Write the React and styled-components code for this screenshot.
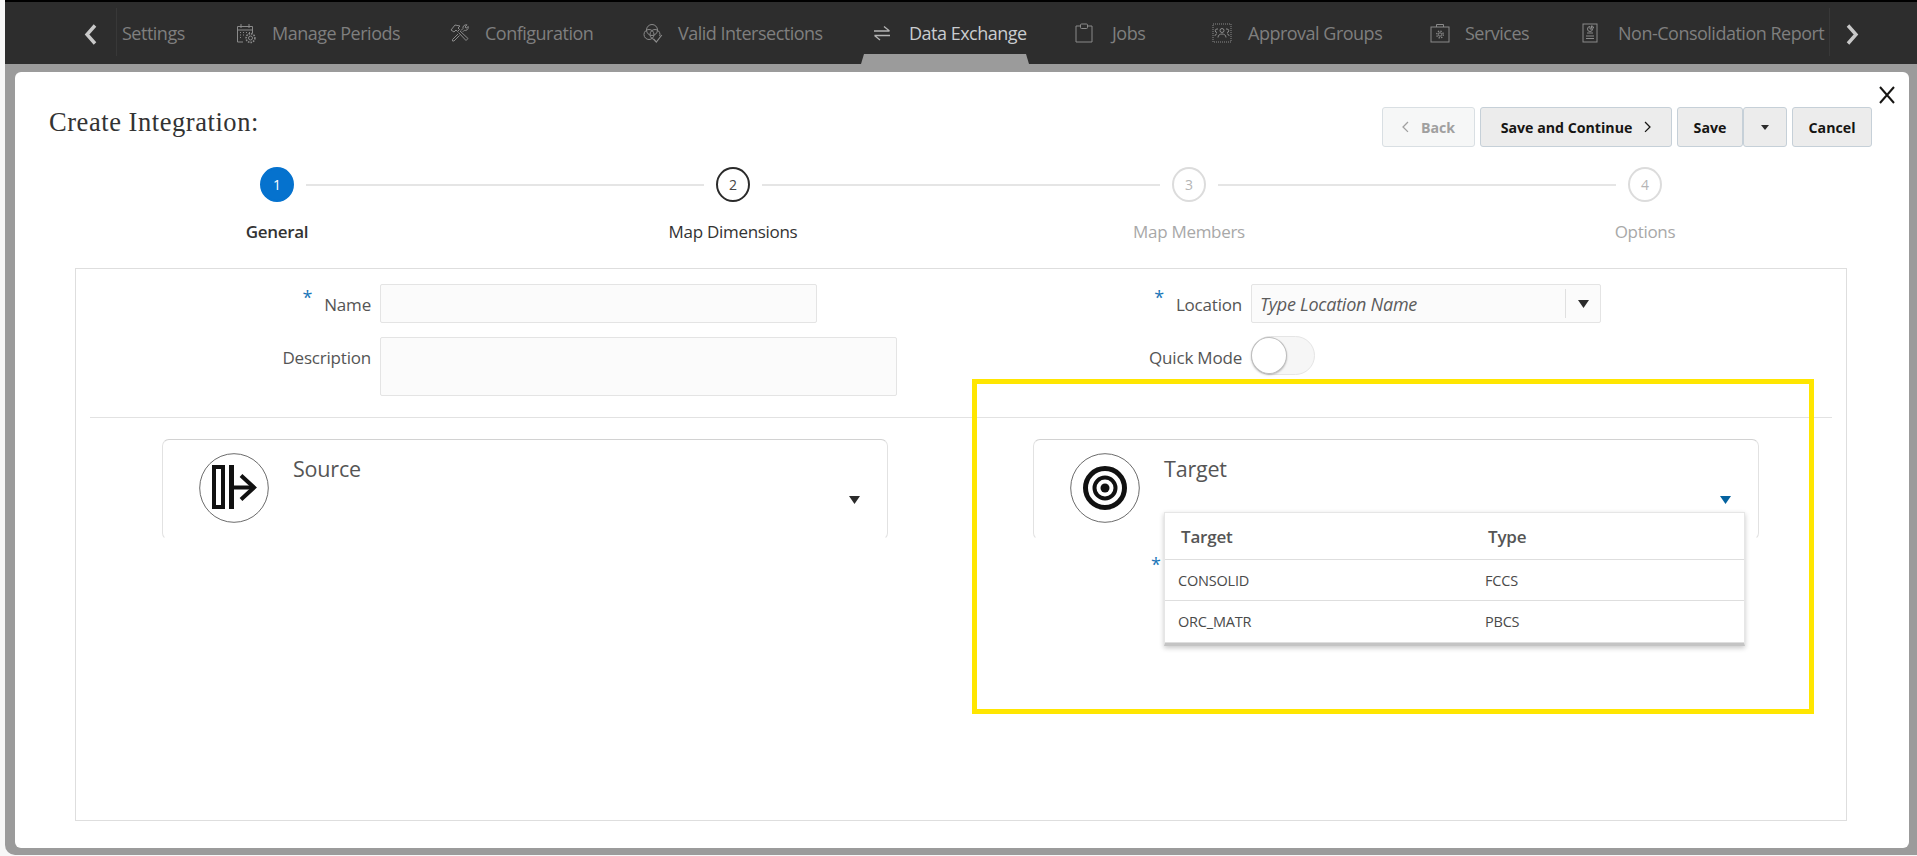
import React from "react";
import styled, { createGlobalStyle } from "styled-components";

const Global = createGlobalStyle`
  html, body { margin: 0; padding: 0; background: #f7f7f7; }
  * { box-sizing: border-box; }
  body { font-family: "Open Sans", "Noto Sans", "Liberation Sans", sans-serif; }
`;

const Page = styled.div`
  position: relative;
  width: 1917px;
  height: 856px;
  padding-left: 5px;
  overflow: hidden;
`;
const TopEdge = styled.div`height: 2px; background: #000;`;
const Nav = styled.nav`
  height: 62px;
  background: #2d2d2d;
  display: flex;
  align-items: stretch;
`;
const NavArrow = styled.div`
  width: ${p => p.$w}px;
  padding: 2px 0 0 ${p => p.$pl}px;
  display: flex;
  align-items: center;
  color: #c9c9c9;
  flex: none;
`;
const NavScroller = styled.div`
  height: 48px;
  margin: 6px 0 8px;
  padding: 2px 0 0 5px;
  width: 1714px;
  flex: none;
  border-left: 1px solid #383838;
  border-right: 1px solid #383838;
  display: flex;
  align-items: center;
`;
const NavItem = styled.div`
  display: flex;
  align-items: center;
  flex: none;
  width: ${p => p.$w}px;
  color: ${p => (p.$active ? "#c9cccf" : "#7f7f7f")};
  font-size: 18px;
  letter-spacing: -0.5px;
  white-space: nowrap;
`;
const NavIcon = styled.span`
  display: flex;
  flex: none;
  width: ${p => p.$w}px;
  color: ${p => (p.$active ? "#b4b4b4" : "#8a8a8a")};
`;
const ActiveTab = styled.div`
  position: absolute;
  left: 861px;
  top: 54px;
  width: 168px;
  height: 10px;
  background: #9b9b9b;
  clip-path: polygon(3px 0, 165px 0, 168px 100%, 0 100%);
`;
const Frame = styled.div`
  background: #9b9b9b;
  padding: 8px 8px 7px 10px;
  height: 791px;
  border-bottom-left-radius: 10px;
`;
const Panel = styled.main`
  position: relative;
  background: #fff;
  height: 776px;
  border-radius: 6px;
  padding: 35px 34px 0;
`;
const Close = styled.button`
  position: absolute;
  right: 13px;
  top: 14px;
  width: 18px;
  height: 18px;
  padding: 0;
  border: 0;
  background: none;
  display: flex;
`;
const HeaderRow = styled.header`
  display: flex;
  align-items: center;
  justify-content: space-between;
  height: 40px;
`;
const Title = styled.h1`
  margin: -10px 0 0;
  font: 400 26.5px "Liberation Serif", "Times New Roman", serif;
  color: #333;
  letter-spacing: 0.55px;
`;
const Buttons = styled.div`
  display: flex;
  align-items: stretch;
  height: 40px;
  margin-right: 3px;
`;
const Btn = styled.button`
  width: ${p => p.$w}px;
  margin-left: ${p => p.$ml ?? 5}px;
  height: 40px;
  padding: 0;
  display: flex;
  align-items: center;
  justify-content: center;
  gap: ${p => p.$gap || 0}px;
  background: ${p => (p.$off ? "#f6f7f7" : "#ececec")};
  border: 1px solid ${p => (p.$off ? "#d9dfe3" : "#c6d0d8")};
  border-radius: 3px;
  color: ${p => (p.$off ? "#a0a0a0" : "#161513")};
  font: 700 14.2px "Open Sans", sans-serif;
`;
const CircleRow = styled.div`
  display: flex;
  align-items: center;
  margin: 20px 213px 0 211px;
`;
const StepCircle = styled.div`
  width: 34px;
  height: 35px;
  flex: none;
  border-radius: 50%;
  display: flex;
  align-items: center;
  justify-content: center;
  font-size: 14px;
  background: ${p => (p.$state === "current" ? "#0572ce" : "#fff")};
  color: ${p => (p.$state === "current" ? "#fff" : p.$state === "next" ? "#444" : "#b5b5b5")};
  border: 2px solid ${p => (p.$state === "current" ? "#0572ce" : p.$state === "next" ? "#2b2b2b" : "#dcdcdc")};
`;
const StepLine = styled.div`
  flex: 1;
  height: 2px;
  margin: 0 12px;
  background: #e5e5e5;
`;
const LabelRow = styled.div`
  display: grid;
  grid-template-columns: repeat(4, 456px);
  margin-top: 18px;
  height: 25px;
`;
const StepLabel = styled.div`
  text-align: center;
  font-size: 17px;
  line-height: 24px;
  letter-spacing: -0.3px;
  font-weight: ${p => (p.$state === "current" ? 600 : 400)};
  color: ${p => (p.$state === "off" ? "#a8a8a8" : "#333")};
`;
const ContentBox = styled.section`
  margin: 23px 28px 0 26px;
  height: 553px;
  border: 1px solid #dedede;
`;
const Form = styled.div`
  display: grid;
  grid-template-columns: 295px 559px 294px 1fr;
  grid-template-rows: 39px 59px;
  column-gap: 9px;
  row-gap: 14px;
  margin-top: 15px;
`;
const FieldLabel = styled.label`
  display: flex;
  justify-content: flex-end;
  align-items: center;
  padding-top: 3px;
  font-size: 17px;
  line-height: 28px;
  height: 39px;
  letter-spacing: -0.2px;
  color: #555;
`;
const Req = styled.span`
  color: #1a76b8;
  font-size: 18px;
  line-height: 16px;
  margin-right: 12px;
  align-self: flex-start;
  margin-top: 2px;
`;
const Input = styled.div`
  width: ${p => p.$w}px;
  height: ${p => p.$h}px;
  background: #fbfbfb;
  border: 1px solid #e4e4e4;
  border-radius: 2px;
  display: flex;
  align-items: center;
`;
const Placeholder = styled.span`
  flex: 1;
  padding-left: 8px;
  font-size: 18px;
  font-style: italic;
  letter-spacing: -0.25px;
  color: #5c5c5c;
`;
const ComboSep = styled.span`
  width: 1px;
  height: 29px;
  background: #e0e0e0;
`;
const Caret = styled.svg`
  display: block;
  flex: none;
  width: ${p => p.$w}px;
  height: ${p => p.$h}px;
  fill: ${p => p.$color || "#2b2b2b"};
`;
const ComboCaret = styled.span`
  width: 34px;
  display: flex;
  justify-content: center;
`;
const Toggle = styled.div`
  position: relative;
  width: 64px;
  height: 39px;
  margin-top: -1px;
  background: #f6f6f6;
  border: 1px solid #e5e5e5;
  border-radius: 20px;
`;
const Thumb = styled.div`
  position: absolute;
  left: -1px;
  top: 0;
  width: 36px;
  height: 37px;
  border-radius: 50%;
  background: #fff;
  border: 1px solid #bdbdbd;
  box-shadow: 0 1px 2px rgba(0,0,0,.25);
`;
const Divider = styled.hr`
  border: 0;
  height: 1px;
  background: #e2e2e2;
  margin: 21px 14px 0 14px;
`;
const Cards = styled.div`
  display: flex;
  gap: 145px;
  padding-left: 86px;
  margin-top: 21px;
`;
const CardColumn = styled.div`
  width: ${p => p.$w}px;
`;
const Card = styled.div`
  position: relative;
  height: 101px;
  display: flex;
  padding: 13px 27px 0 36px;
  border: 1px solid #d2d2d2;
  border-left-color: #e2e2e2;
  border-right-color: #e2e2e2;
  border-bottom-color: transparent;
  border-radius: 7px;
`;
const CardIcon = styled.svg`
  width: 70px;
  height: 70px;
  flex: none;
`;
const CardBody = styled.div`
  flex: 1;
  margin-left: 24px;
  display: flex;
  flex-direction: column;
`;
const CardTitle = styled.div`
  font-size: 21.5px;
  line-height: 30px;
  margin-top: 1px;
  letter-spacing: -0.2px;
  color: #555;
`;
const CardCaret = styled.div`
  display: flex;
  justify-content: flex-end;
  margin-top: 12px;
`;
const Menu = styled.div`
  position: absolute;
  left: 130px;
  top: 72px;
  width: 581px;
  height: 134px;
  background: #fff;
  border: 1px solid #e6e6e6;
  border-bottom: 3px solid #c4c4c4;
  box-shadow: 0 2px 5px rgba(0,0,0,.22);
  z-index: 2;
`;
const MenuRow = styled.div`
  display: grid;
  grid-template-columns: 307px 1fr;
  align-items: center;
  height: ${p => p.$h}px;
  padding-left: ${p => (p.$head ? 16 : 13)}px;
  padding-top: ${p => (p.$head ? 1 : 0)}px;
  border-bottom: 1px solid #dedede;
  font-size: ${p => (p.$head ? 17 : 14.5)}px;
  font-weight: ${p => (p.$head ? 600 : 400)};
  letter-spacing: -0.2px;
  color: ${p => (p.$head ? "#555" : "#4a4a4a")};
`;
const BelowCard = styled.div`
  color: #1a76b8;
  font-size: 18px;
  line-height: 20px;
  margin: 14px 0 0 118px;
`;
const Highlight = styled.div`
  position: absolute;
  left: 972px;
  top: 379px;
  width: 842px;
  height: 335px;
  border: 5px solid #ffe600;
  pointer-events: none;
  z-index: 3;
`;

const Line = { fill: "none", stroke: "currentColor", strokeWidth: 1 };

const IconCalendar = () => (
  <svg width="21" height="21" viewBox="0 0 21 21" {...Line}>
    <path d="M7 19H1.500V3.500h15V10M1.500 7h15M5 1v4M13 1v4" />
    <path d="M4 9.500h1M7 9.500h1M10 9.500h1M13 9.500h1M4 12h1M7 12h1M4 14.500h1" strokeDasharray="1 1" />
    <circle cx="14.500" cy="15" r="2" />
    <circle cx="14.500" cy="15" r="4.400" strokeDasharray="1.600 1" strokeWidth="1.600" />
  </svg>
);
const IconTools = () => (
  <svg width="20" height="20" viewBox="0 0 20 20" {...Line}>
    <path d="M1 7l4-5 5 1-2 2 1.500 1.500-2 2L6 7 4 9zM8.500 9.500l7.500 8 2-2-8-7.500" />
    <path d="M11 7.500l2-2c-.5-2 1-4 4-3.700l-2 2.200 1 1.200 2.300-1.700c.3 3-2 4.500-4 3.800l-1.500 1.500M8 11l-5.500 5.500v1.500h1.500L9.500 12.500" />
  </svg>
);
const IconVenn = () => (
  <svg width="20" height="20" viewBox="0 0 20 20" {...Line}>
    <circle cx="9" cy="7" r="5.500" />
    <circle cx="6" cy="11.500" r="5" />
    <circle cx="12" cy="11.500" r="5" />
    <path d="M10.500 16l2.800 3 5.500-7" fill="#2d2d2d" strokeWidth="1.200" />
  </svg>
);
const IconSwap = () => (
  <svg width="18" height="16" viewBox="0 0 18 16" {...Line} strokeWidth="1.300">
    <path d="M1 6h15.500M11 1.500L16.500 6M17 10.500H1.500M7 15L1.500 10.500" />
  </svg>
);
const IconClipboard = () => (
  <svg width="18" height="20" viewBox="0 0 18 20" {...Line}>
    <path d="M5.500 3H1v16h16V3h-4.500" />
    <rect x="5.500" y="1" width="7" height="4.500" rx="1" />
  </svg>
);
const IconGroup = () => (
  <svg width="20" height="20" viewBox="0 0 20 20" {...Line}>
    <rect x="1" y="1" width="18" height="18" strokeDasharray="1 1" />
    <circle cx="10" cy="7.500" r="2" />
    <path d="M6 14.500c0-2.500 2-3.500 4-3.500s4 1 4 3.500M6 6h-1a1.500 1.500 0 0 0 0 3.500M14 6h1a1.500 1.500 0 0 1 0 3.500M3 13c0-1.500 1-2 2-2M17 13c0-1.500-1-2-2-2" />
  </svg>
);
const IconCase = () => (
  <svg width="20" height="20" viewBox="0 0 20 20" {...Line}>
    <rect x="1" y="4" width="18" height="15" />
    <path d="M6.500 4V1.500h7V4" />
    <circle cx="10" cy="11.500" r="1.700" />
    <circle cx="10" cy="11.500" r="3.300" strokeDasharray="1.300 1.300" strokeWidth="1.400" />
  </svg>
);
const IconReport = () => (
  <svg width="16" height="20" viewBox="0 0 16 20" {...Line}>
    <rect x="1" y="1" width="14" height="18" />
    <path d="M5 10h6M4 13h8M4 15.500h8" />
    <path d="M8 3.500A2.500 2.500 0 1 0 10.500 6H8zM9.500 2.800A2.500 2.500 0 0 1 11.700 5H9.500z" />
  </svg>
);

const CaretDown = ({ color, w = 11, h = 8 }) => (
  <Caret viewBox="0 0 11 8" preserveAspectRatio="none" $w={w} $h={h} $color={color}><path d="M0 0h11L5.500 8z" /></Caret>
);
const ChevronThin = ({ dir, size = 7, color = "currentColor" }) => (
  <svg width={size} height={size * 1.700} viewBox="0 0 7 12" fill="none" stroke={color} strokeWidth="1.300">
    <path d={dir === "left" ? "M6 1L1 6l5 5" : "M1 1l5 5-5 5"} />
  </svg>
);
const NavChevron = ({ dir }) => (
  <svg width="13" height="21" viewBox="0 0 13 21" fill="none" stroke="currentColor" strokeWidth="3.400">
    <path d={dir === "left" ? "M11 1.500L3 10.500l8 9" : "M2 1.500l8 9-8 9"} />
  </svg>
);

const navItems = [
  { label: "Settings", w: 114 },
  { label: "Manage Periods", icon: <IconCalendar />, iw: 36, w: 214 },
  { label: "Configuration", icon: <IconTools />, iw: 35, w: 193 },
  { label: "Valid Intersections", icon: <IconVenn />, iw: 35, w: 230 },
  { label: "Data Exchange", icon: <IconSwap />, iw: 36, w: 202, active: true },
  { label: "Jobs", icon: <IconClipboard />, iw: 37, w: 137 },
  { label: "Approval Groups", icon: <IconGroup />, iw: 36, w: 218 },
  { label: "Services", icon: <IconCase />, iw: 35, w: 152 },
  { label: "Non-Consolidation Report", icon: <IconReport />, iw: 36, w: 244 },
];

const steps = [
  { n: 1, label: "General", state: "current" },
  { n: 2, label: "Map Dimensions", state: "next" },
  { n: 3, label: "Map Members", state: "off" },
  { n: 4, label: "Options", state: "off" },
];

export default function App() {
  return (
    <Page>
      <Global />
      <TopEdge />
      <Nav>
        <NavArrow $w={111} $pl={79}><NavChevron dir="left" /></NavArrow>
        <NavScroller>
          {navItems.map(it => (
            <NavItem key={it.label} $w={it.w} $active={it.active}>
              {it.icon && <NavIcon $w={it.iw} $active={it.active}>{it.icon}</NavIcon>}
              {it.label}
            </NavItem>
          ))}
        </NavScroller>
        <NavArrow $w={50} $pl={16}><NavChevron dir="right" /></NavArrow>
      </Nav>
      <ActiveTab />
      <Frame>
        <Panel>
          <Close aria-label="Close">
            <svg width="18" height="18" viewBox="0 0 18 18" fill="none" stroke="#161513" strokeWidth="2"><path d="M2 1l14 16M16 1L2 17" /></svg>
          </Close>
          <HeaderRow>
            <Title>Create Integration:</Title>
            <Buttons>
              <Btn $w={93} $off $gap={12}><ChevronThin dir="left" color="#a0a0a0" />Back</Btn>
              <Btn $w={192} $gap={12}>Save and Continue<ChevronThin dir="right" /></Btn>
              <Btn $w={66}>Save</Btn>
              <Btn $w={44} $ml={0}><CaretDown w={8} h={5} /></Btn>
              <Btn $w={80}>Cancel</Btn>
            </Buttons>
          </HeaderRow>
          <CircleRow>
            {steps.map((s, i) => (
              <React.Fragment key={s.n}>
                {i > 0 && <StepLine />}
                <StepCircle $state={s.state}>{s.n}</StepCircle>
              </React.Fragment>
            ))}
          </CircleRow>
          <LabelRow>
            {steps.map(s => <StepLabel key={s.n} $state={s.state}>{s.label}</StepLabel>)}
          </LabelRow>
          <ContentBox>
            <Form>
              <FieldLabel><Req>*</Req>Name</FieldLabel>
              <Input $w={437} $h={39} />
              <FieldLabel><Req>*</Req>Location</FieldLabel>
              <Input $w={350} $h={39}>
                <Placeholder>Type Location Name</Placeholder>
                <ComboSep />
                <ComboCaret><CaretDown /></ComboCaret>
              </Input>
              <FieldLabel>Description</FieldLabel>
              <Input $w={517} $h={59} />
              <FieldLabel>Quick Mode</FieldLabel>
              <Toggle><Thumb /></Toggle>
            </Form>
            <Divider />
            <Cards>
              <CardColumn $w={726}>
                <Card>
                  <CardIcon viewBox="0 0 70 70">
                    <circle cx="35" cy="35" r="34.300" fill="#fff" stroke="#6b6b6b" strokeWidth="1" />
                    <rect x="15" y="14" width="9" height="40" fill="none" stroke="#111" strokeWidth="4" />
                    <rect x="30" y="12" width="5" height="44" fill="#111" />
                    <path d="M35 34.500h19" stroke="#111" strokeWidth="4" />
                    <path d="M42 22.500l13 12-13 12" fill="none" stroke="#111" strokeWidth="4" />
                  </CardIcon>
                  <CardBody>
                    <CardTitle>Source</CardTitle>
                    <CardCaret><CaretDown /></CardCaret>
                  </CardBody>
                </Card>
              </CardColumn>
              <CardColumn $w={726}>
                <Card>
                  <CardIcon viewBox="0 0 70 70">
                    <circle cx="35" cy="35" r="34.300" fill="#fff" stroke="#6b6b6b" strokeWidth="1" />
                    <circle cx="35" cy="35" r="19.500" fill="none" stroke="#111" strokeWidth="5" />
                    <circle cx="35" cy="35" r="10.500" fill="none" stroke="#111" strokeWidth="4" />
                    <circle cx="35" cy="35" r="4.500" fill="#111" />
                  </CardIcon>
                  <CardBody>
                    <CardTitle>Target</CardTitle>
                    <CardCaret><CaretDown color="#04629f" /></CardCaret>
                  </CardBody>
                  <Menu>
                    <MenuRow $head $h={47}><span>Target</span><span>Type</span></MenuRow>
                    <MenuRow $h={41}><span>CONSOLID</span><span>FCCS</span></MenuRow>
                    <MenuRow $h={42}><span>ORC_MATR</span><span>PBCS</span></MenuRow>
                  </Menu>
                </Card>
                <BelowCard>*</BelowCard>
              </CardColumn>
            </Cards>
          </ContentBox>
        </Panel>
      </Frame>
      <Highlight />
    </Page>
  );
}
